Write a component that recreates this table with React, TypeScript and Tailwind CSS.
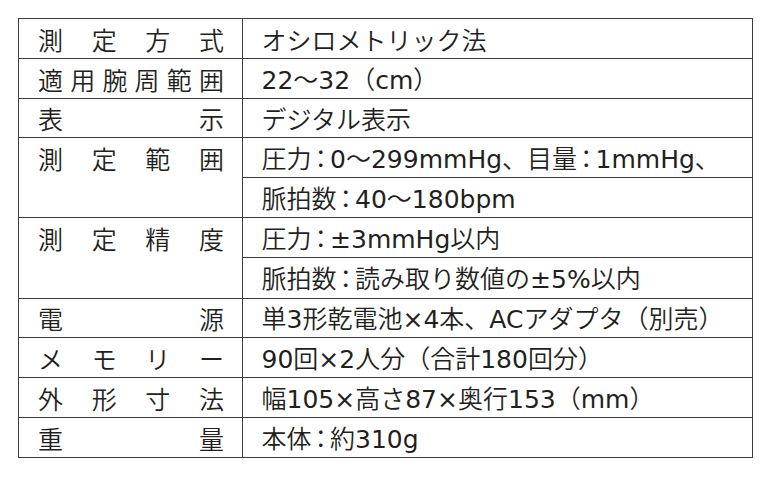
const rows = [
  { label: ["測", "定", "方", "式"], values: ["オシロメトリック法"] },
  { label: ["適", "用", "腕", "周", "範", "囲"], values: ["22〜32（cm）"] },
  { label: ["表", "示"], values: ["デジタル表示"] },
  { label: ["測", "定", "範", "囲"], values: ["圧力：0〜299mmHg、目量：1mmHg、", "脈拍数：40〜180bpm"] },
  { label: ["測", "定", "精", "度"], values: ["圧力：±3mmHg以内", "脈拍数：読み取り数値の±5%以内"] },
  { label: ["電", "源"], values: ["単3形乾電池×4本、ACアダプタ（別売）"] },
  { label: ["メ", "モ", "リ", "ー"], values: ["90回×2人分（合計180回分）"] },
  { label: ["外", "形", "寸", "法"], values: ["幅105×高さ87×奥行153（mm）"] },
  { label: ["重", "量"], values: ["本体：約310g"] },
];

const latin = /^[A-Za-z0-9%±×]+$/;

// latin runs get DejaVu Sans at regular weight, the colon is set proportional
function Runs({ text }: { text: string }) {
  const parts = text.split(/([A-Za-z0-9%±×]+|：)/).filter(Boolean);
  return (
    <>
      {parts.map((p, k) => {
        if (latin.test(p))
          return (
            <span key={k} className="font-normal" style={{ fontFamily: '"DejaVu Sans", sans-serif' }}>
              {p}
            </span>
          );
        if (p === "：")
          return (
            <span key={k} className="px-[3px] [font-feature-settings:'palt']">
              {p}
            </span>
          );
        return <span key={k}>{p}</span>;
      })}
    </>
  );
}

export default function App() {
  return (
    <div
      className="w-[768px] h-[486px] bg-white pt-[18px] pl-[18px] text-[#231f20] text-[25px] leading-none font-[350]"
      style={{ fontFamily: '"Noto Sans CJK JP", sans-serif' }}
    >
      <div className="w-[735px] border-[1.5px] border-b-0 border-[#3d3d3d]">
        {rows.map((row, i) => (
          <div key={i} className="flex border-b-[1.5px] border-[#3d3d3d]">
            <div className="w-[224px] shrink-0 border-r-[1.5px] border-[#3d3d3d] pl-[19px] pr-[18px] pt-[2px] h-[38.8px] self-start flex items-center justify-between">
              {row.label.map((ch, j) => (
                <span key={j}>{ch}</span>
              ))}
            </div>
            <div className="flex-1 flex flex-col border-l-[1.5px] border-[#3d3d3d] -ml-[1.5px]">
              {row.values.map((v, j) => (
                <div
                  key={j}
                  className={`flex items-center pl-[19px] pt-[2px] ${j > 0 ? "border-t-[1.5px] border-[#3d3d3d] h-[40.3px]" : "h-[38.8px]"}`}
                >
                  <span className="whitespace-nowrap">
                    <Runs text={v} />
                  </span>
                </div>
              ))}
            </div>
          </div>
        ))}
      </div>
    </div>
  );
}
